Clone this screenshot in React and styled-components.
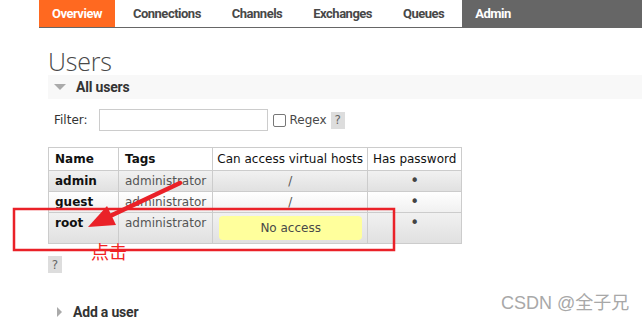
import React from "react";
import styled, { createGlobalStyle } from "styled-components";

const Global = createGlobalStyle`
  html, body { margin: 0; padding: 0; background: #fff; }
  body { font-family: "DejaVu Sans", Verdana, sans-serif; font-size: 12px; color: #484848; }
  #root { width: 642px; height: 320px; overflow: hidden; position: relative; }
`;

const Page = styled.div`
  position: relative;
  width: 642px;
  height: 320px;
`;

const Nav = styled.ul`
  display: flex;
  gap: 5px;
  margin: 0 0 0 39px;
  padding: 0;
  list-style: none;
  height: 27px;
  border-bottom: 1px solid #666;
`;

const Tab = styled.li`
  display: flex;
  align-items: center;
  padding: 0 13px;
  height: 27px;
  font-family: Roboto, "DejaVu Sans Condensed", sans-serif;
  font-weight: 700;
  font-size: 13px;
  letter-spacing: -0.5px;
  color: ${(p) => (p.$variant ? "#fff" : "#484848")};
  background: ${(p) =>
    p.$variant === "orange" ? "#ff6920" : p.$variant === "gray" ? "#666" : "transparent"};
  flex: ${(p) => (p.$grow ? 1 : "none")};
`;

const Main = styled.div`
  padding-left: 48px;
`;

const Title = styled.h1`
  margin: 19px 0 0;
  font-family: "Open Sans", sans-serif;
  font-weight: 300;
  font-size: 25px;
  line-height: 28px;
  color: #484848;
  letter-spacing: -0.2px;
`;

const SectionHead = styled.div`
  display: flex;
  align-items: center;
  gap: 8px;
  height: 24px;
  background: ${(p) => (p.$plain ? "transparent" : "#f8f8f8")};
  padding-left: ${(p) => (p.$plain ? "9px" : "6px")};
  font-family: Roboto, sans-serif;
  font-weight: 700;
  font-size: 14px;
  letter-spacing: -0.2px;
  color: #333;
`;

const TriDown = styled.span`
  width: 0;
  height: 0;
  border-left: 6px solid transparent;
  border-right: 6px solid transparent;
  border-top: 6px solid #aaa;
  margin-right: 2px;
`;

const TriRight = styled.span`
  width: 0;
  height: 0;
  border-top: 5px solid transparent;
  border-bottom: 5px solid transparent;
  border-left: 5px solid #aaa;
  margin-right: 3px;
`;

const FilterRow = styled.div`
  display: flex;
  align-items: center;
  margin: 10px 0 0 6px;
  height: 22px;
`;

const Label = styled.label`
  margin-right: 11px;
  color: #333;
`;

const Input = styled.div`
  width: 167px;
  height: 20px;
  border: 1px solid #ccc;
  background: #fff;
`;

const Check = styled.span`
  width: 11px;
  height: 11px;
  border: 1px solid #777;
  border-radius: 2px;
  margin: 0 4px 0 5px;
`;

const Help = styled.span`
  display: inline-flex;
  align-items: center;
  justify-content: center;
  width: 14px;
  height: 17px;
  background: #ddd;
  color: #666;
  font-size: 12px;
  margin-left: ${(p) => p.$ml || "0"};
`;

const Table = styled.table`
  border-collapse: collapse;
  margin-top: 16px;
  font-size: 12px;
`;

const Th = styled.th`
  box-sizing: border-box;
  border: 1px solid #ccc;
  height: 23px;
  padding: 0 ${(p) => (p.$center ? "4px" : "6px")};
  text-align: ${(p) => (p.$center ? "center" : "left")};
  font-weight: ${(p) => (p.$bold ? 700 : 400)};
  color: #111;
  background: #fff;
  width: ${(p) => p.$w};
  min-width: ${(p) => p.$w};
  max-width: ${(p) => p.$w};
  white-space: nowrap;
`;

const Tr = styled.tr`
  background: ${(p) =>
    p.$alt ? "linear-gradient(#ffffff, #f0f0f0)" : "linear-gradient(#f1f1f1, #e0e0e0)"};
`;

const Td = styled.td`
  border: 1px solid #ccc;
  height: ${(p) => p.$h || "20px"};
  padding: 0 ${(p) => (p.$center ? "4px" : "6px")};
  vertical-align: top;
  line-height: 20px;
  text-align: ${(p) => (p.$center ? "center" : "left")};
  font-weight: ${(p) => (p.$bold ? 700 : 400)};
  color: ${(p) => (p.$bold ? "#111" : "#555")};
  white-space: nowrap;
`;

const Warn = styled.div`
  margin: 3px 1px 0 2px;
  height: 24px;
  border-radius: 4px;
  background: #ffff9c;
  display: flex;
  align-items: center;
  justify-content: center;
  color: #484848;
`;

const Bullet = styled.span`
  display: inline-block;
  vertical-align: top;
  height: 20px;
  line-height: 21px;
  font-size: 15px;
  color: #444;
`;

const BelowHelp = styled.div`
  margin-top: 12px;
`;

const AddSection = styled.div`
  margin-top: 27px;
`;

const Overlay = styled.svg`
  position: absolute;
  left: 0;
  top: 0;
  pointer-events: none;
`;

const ClickNote = styled.span`
  position: absolute;
  left: 91px;
  top: 238px;
  font-family: "Noto Sans CJK SC", sans-serif;
  font-size: 18px;
  color: #f22222;
`;

const Watermark = styled.span`
  position: absolute;
  left: 501px;
  top: 288px;
  font-family: "Liberation Sans", "Noto Sans CJK SC", sans-serif;
  font-size: 18px;
  color: #a8a8a8;
`;

const tabs = [
  { label: "Overview", variant: "orange" },
  { label: "Connections" },
  { label: "Channels" },
  { label: "Exchanges" },
  { label: "Queues" },
  { label: "Admin", variant: "gray", grow: true },
];

const users = [
  { name: "admin", tags: "administrator", vhost: "/" },
  { name: "guest", tags: "administrator", vhost: "/", alt: true },
  { name: "root", tags: "administrator", vhost: null },
];

export default function App() {
  return (
    <Page>
      <Global />
      <Nav>
        {tabs.map((t) => (
          <Tab key={t.label} $variant={t.variant} $grow={t.grow}>
            {t.label}
          </Tab>
        ))}
      </Nav>
      <Main>
        <Title>Users</Title>
        <SectionHead>
          <TriDown />
          All users
        </SectionHead>
        <FilterRow>
          <Label>Filter:</Label>
          <Input />
          <Check />
          <span>Regex</span>
          <Help $ml="4px">?</Help>
        </FilterRow>
        <Table>
          <thead>
            <tr>
              <Th $bold $w="70px">Name</Th>
              <Th $bold $w="91px">Tags</Th>
              <Th $center $w="155px">Can access virtual hosts</Th>
              <Th $center $w="94px">Has password</Th>
            </tr>
          </thead>
          <tbody>
            {users.map((u) => (
              <Tr key={u.name} $alt={u.alt}>
                <Td $bold $h={u.vhost ? "20px" : "30px"}>{u.name}</Td>
                <Td>{u.tags}</Td>
                <Td $center>{u.vhost ? u.vhost : <Warn>No access</Warn>}</Td>
                <Td $center>
                  <Bullet>•</Bullet>
                </Td>
              </Tr>
            ))}
          </tbody>
        </Table>
        <BelowHelp>
          <Help>?</Help>
        </BelowHelp>
        <AddSection>
          <SectionHead $plain>
            <TriRight />
            Add a user
          </SectionHead>
        </AddSection>
      </Main>

      <Overlay width="642" height="320" viewBox="0 0 642 320">
        <rect x="14" y="209" width="380" height="41" fill="none" stroke="#ea2128" strokeWidth="2.5" />
        <line x1="180" y1="183" x2="108" y2="217" stroke="#ea2128" strokeWidth="4.5" strokeLinecap="round" />
        <polygon points="88,227 107,206 116,225" fill="#ea2128" />
      </Overlay>
      <ClickNote>点击</ClickNote>
      <Watermark>CSDN @全子兄</Watermark>
    </Page>
  );
}
